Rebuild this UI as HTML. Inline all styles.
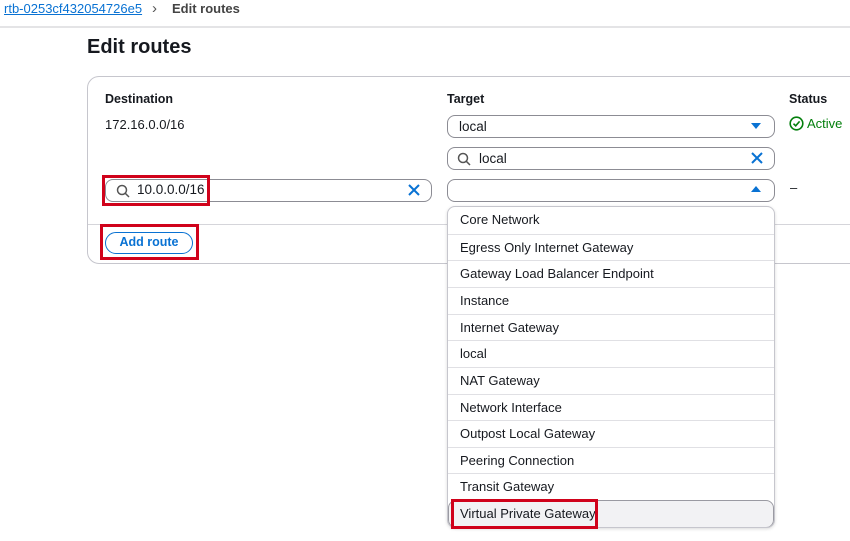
<!DOCTYPE html>
<html><head><style>
*{box-sizing:border-box;margin:0;padding:0}
body{width:850px;height:541px;background:#fff;font-family:"Liberation Sans",sans-serif;color:#16191f;position:relative;overflow:hidden;font-size:13px}
.a{position:absolute}
.inp{position:absolute;border:1px solid #8c8c94;border-radius:8px;background:#fff;height:23px}
.item{position:absolute;left:0;width:100%;height:27px;border-top:1px solid #e0e0e4;padding-left:12px;line-height:26px;font-size:13px}
</style></head><body>
<div class="a" style="left:4px;top:1px;font-size:13px;color:#0972d3;text-decoration:underline">rtb-0253cf432054726e5</div>
<div class="a" style="left:152px;top:0px;font-size:15px;color:#555">&#x203A;</div>
<div class="a" style="left:172px;top:1px;font-size:13px;color:#444;font-weight:bold">Edit routes</div>
<div class="a" style="left:0;top:26px;width:850px;height:2px;background:#e4e4e6"></div>
<div class="a" style="left:87px;top:36px;font-size:20px;font-weight:bold">Edit routes</div>
<div class="a" style="left:87px;top:76px;width:800px;height:188px;border:1px solid #c6c6cd;border-radius:12px"></div>
<div class="a" style="left:88px;top:224px;width:762px;height:1px;background:#d5d5da"></div>
<div class="a" style="left:105px;top:92px;font-weight:bold;font-size:12.5px">Destination</div>
<div class="a" style="left:105px;top:117px;font-size:13px">172.16.0.0/16</div>
<div class="a" style="left:447px;top:92px;font-weight:bold;font-size:12.5px">Target</div>
<div class="a" style="left:789px;top:92px;font-weight:bold;font-size:12.5px">Status</div>
<svg class="a" style="left:789px;top:116px" width="15" height="15"><circle cx="7.5" cy="7.5" r="6.3" fill="none" stroke="#037f0c" stroke-width="1.6"/><path d="M4.5 7.7L6.7 9.8L10.6 5.4" fill="none" stroke="#037f0c" stroke-width="1.6"/></svg>
<div class="a" style="left:807px;top:116px;color:#037f0c;font-size:13px">Active</div>
<div class="a" style="left:790px;top:180px;font-size:13px">–</div>
<div class="inp" style="left:105px;top:179px;width:327px"></div>
<svg class="a" style="left:116px;top:184px" width="14" height="14"><circle cx="6" cy="6" r="4.5" fill="none" stroke="#555" stroke-width="1.5"/><line x1="9.3" y1="9.3" x2="13" y2="13" stroke="#555" stroke-width="1.5"/></svg>
<div class="a" style="left:137px;top:182px;font-size:13.5px">10.0.0.0/16</div>
<svg class="a" style="left:408px;top:184px" width="12" height="12"><path d="M1 1L11 11M11 1L1 11" stroke="#0972d3" stroke-width="2"/></svg>
<div class="a" style="left:102px;top:175px;width:108px;height:31px;border:3px solid #d0021b"></div>
<div class="a" style="left:105px;top:232px;width:88px;height:22px;border:1.5px solid #0972d3;border-radius:12px;color:#0972d3;font-weight:bold;font-size:12.5px;text-align:center;line-height:19px">Add route</div>
<div class="a" style="left:100px;top:224px;width:99px;height:36px;border:3px solid #d0021b"></div>
<div class="inp" style="left:447px;top:115px;width:328px"></div>
<div class="a" style="left:459px;top:119px;font-size:13.5px">local</div>
<svg class="a" style="left:751px;top:123px" width="10" height="8"><path d="M0 0H10L5 6Z" fill="#0972d3"/></svg>
<div class="inp" style="left:447px;top:147px;width:328px"></div>
<svg class="a" style="left:457px;top:152px" width="14" height="14"><circle cx="6" cy="6" r="4.5" fill="none" stroke="#555" stroke-width="1.5"/><line x1="9.3" y1="9.3" x2="13" y2="13" stroke="#555" stroke-width="1.5"/></svg>
<div class="a" style="left:479px;top:151px;font-size:13.5px">local</div>
<svg class="a" style="left:751px;top:152px" width="12" height="12"><path d="M1 1L11 11M11 1L1 11" stroke="#0972d3" stroke-width="2"/></svg>
<div class="inp" style="left:447px;top:179px;width:328px"></div>
<svg class="a" style="left:751px;top:185px" width="10" height="8"><path d="M0 7H10L5 1Z" fill="#0972d3"/></svg>
<div class="a" style="left:447px;top:206px;width:328px;height:322px;border:1px solid #c6c6cd;border-radius:8px;background:#fff;overflow:hidden;box-shadow:0 1px 3px rgba(0,0,0,.15)">
<div class="item" style="top:0;border-top:none">Core Network</div>
<div class="item" style="top:27px">Egress Only Internet Gateway</div>
<div class="item" style="top:53px">Gateway Load Balancer Endpoint</div>
<div class="item" style="top:80px">Instance</div>
<div class="item" style="top:107px">Internet Gateway</div>
<div class="item" style="top:133px">local</div>
<div class="item" style="top:160px">NAT Gateway</div>
<div class="item" style="top:187px">Network Interface</div>
<div class="item" style="top:213px">Outpost Local Gateway</div>
<div class="item" style="top:240px">Peering Connection</div>
<div class="item" style="top:266px">Transit Gateway</div>
<div class="item" style="top:293px;background:#f2f2f4;border:1px solid #9a9aa2;border-radius:8px;height:28px;padding-left:11px">Virtual Private Gateway</div>
</div>
<div class="a" style="left:451px;top:499px;width:147px;height:30px;border:3px solid #d0021b"></div>
</body></html>
